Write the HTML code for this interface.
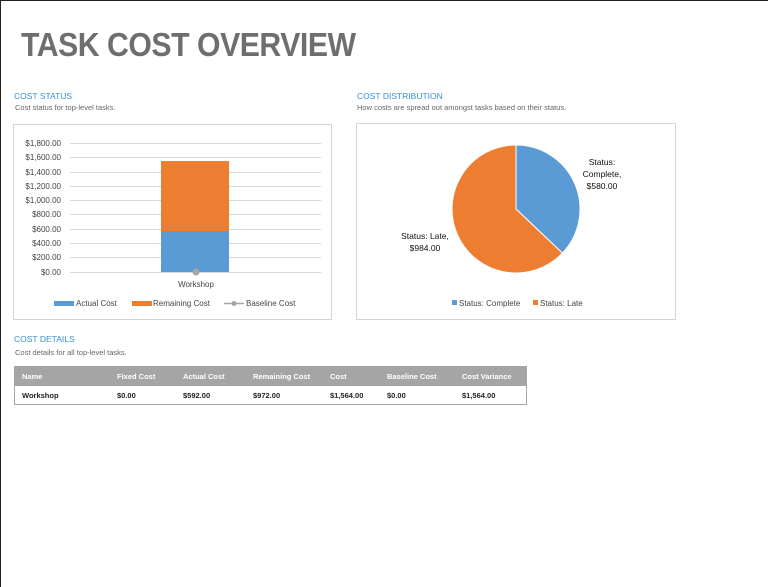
<!DOCTYPE html>
<html><head><style>
body{margin:0;width:768px;height:587px;background:#fff;font-family:"Liberation Sans",sans-serif;position:relative;overflow:hidden}
.bl{position:absolute;left:0;top:0;width:1px;height:587px;background:#222}
.bt{position:absolute;left:0;top:0;width:768px;height:1px;background:#222}
.a{position:absolute}
h1{position:absolute;left:21px;top:26px;margin:0;font-size:33px;font-weight:bold;color:#6e6e6e;letter-spacing:-0.5px;transform:scaleX(0.915);transform-origin:0 0}
.h{color:#3a8fd6;font-size:8.5px}
.s{color:#666;font-size:7.5px}
.box{border:1px solid #d4d4d4;background:#fff}
table{border-collapse:collapse;font-size:7.5px}
th{background:#a5a5a5;color:#fff;text-align:left;font-weight:bold;height:19px;padding:0 0 0 7px}
td{height:18px;padding:0 0 0 7px;font-weight:bold;color:#222}
</style></head><body>
<div class="bl"></div><div class="bt"></div>
<h1>TASK COST OVERVIEW</h1>
<div class="a h" style="left:14px;top:91px">COST STATUS</div>
<div class="a s" style="left:15px;top:103px">Cost status for top-level tasks.</div>
<div class="a box" style="left:13px;top:124px;width:317px;height:194px"></div>
<svg class="a" style="left:0;top:0" width="768" height="587">
<g stroke="#d9d9d9" stroke-width="1">
<line x1="70" x2="321" y1="143.5" y2="143.5"/><line x1="70" x2="321" y1="157.5" y2="157.5"/><line x1="70" x2="321" y1="172.5" y2="172.5"/><line x1="70" x2="321" y1="186.5" y2="186.5"/><line x1="70" x2="321" y1="200.5" y2="200.5"/><line x1="70" x2="321" y1="214.5" y2="214.5"/><line x1="70" x2="321" y1="229.5" y2="229.5"/><line x1="70" x2="321" y1="243.5" y2="243.5"/><line x1="70" x2="321" y1="257.5" y2="257.5"/><line x1="70" x2="321" y1="272.5" y2="272.5"/>
</g>
<g font-size="8" fill="#444" text-anchor="end" font-family="Liberation Sans">
<text x="61" y="146">$1,800.00</text><text x="61" y="160">$1,600.00</text><text x="61" y="175">$1,400.00</text><text x="61" y="189">$1,200.00</text><text x="61" y="203">$1,000.00</text><text x="61" y="217">$800.00</text><text x="61" y="232">$600.00</text><text x="61" y="246">$400.00</text><text x="61" y="260">$200.00</text><text x="61" y="275">$0.00</text>
</g>
<rect x="161" y="161" width="68" height="70" fill="#ed7d31"/>
<rect x="161" y="231" width="68" height="41" fill="#5b9bd5"/>
<circle cx="196" cy="272" r="3.5" fill="#a5a5a5"/>
<text x="196" y="287" font-size="8" fill="#444" text-anchor="middle">Workshop</text>
<rect x="54" y="301" width="20" height="5" fill="#5b9bd5"/><text x="76" y="306" font-size="8" fill="#444">Actual Cost</text>
<rect x="132" y="301" width="20" height="5" fill="#ed7d31"/><text x="153" y="306" font-size="8" fill="#444">Remaining Cost</text>
<line x1="224" x2="244" y1="303.5" y2="303.5" stroke="#a5a5a5" stroke-width="1.5"/><circle cx="234" cy="303.5" r="2.5" fill="#a5a5a5"/><text x="246" y="306" font-size="8" fill="#444">Baseline Cost</text>
</svg>
<div class="a h" style="left:357px;top:91px">COST DISTRIBUTION</div>
<div class="a s" style="left:357px;top:103px">How costs are spread out amongst tasks based on their status.</div>
<div class="a box" style="left:356px;top:123px;width:318px;height:195px"></div>
<svg class="a" style="left:0;top:0" width="768" height="587">
<path d="M516,209 L516,145 A64,64 0 0 1 562.4,253.1 Z" fill="#5b9bd5" stroke="#fff" stroke-width="1"/>
<path d="M516,209 L562.4,253.1 A64,64 0 1 1 516,145 Z" fill="#ed7d31" stroke="#fff" stroke-width="1"/>
<g font-size="8.5" fill="#111" text-anchor="middle">
<text x="602" y="165">Status:</text><text x="602" y="177">Complete,</text><text x="602" y="189">$580.00</text>
<text x="425" y="239">Status: Late,</text><text x="425" y="251">$984.00</text>
</g>
<rect x="452" y="300" width="5" height="5" fill="#5b9bd5"/><text x="459" y="306" font-size="8" fill="#444">Status: Complete</text>
<rect x="533" y="300" width="5" height="5" fill="#ed7d31"/><text x="540" y="306" font-size="8" fill="#444">Status: Late</text>
</svg>
<div class="a h" style="left:14px;top:334px">COST DETAILS</div>
<div class="a s" style="left:15px;top:348px">Cost details for all top-level tasks.</div>
<table class="a" style="left:14px;top:366px;width:513px;border:1px solid #a5a5a5">
<tr><th style="width:88px">Name</th><th style="width:59px">Fixed Cost</th><th style="width:63px">Actual Cost</th><th style="width:70px">Remaining Cost</th><th style="width:50px">Cost</th><th style="width:68px">Baseline Cost</th><th>Cost Variance</th></tr>
<tr><td>Workshop</td><td>$0.00</td><td>$592.00</td><td>$972.00</td><td>$1,564.00</td><td>$0.00</td><td>$1,564.00</td></tr>
</table>
</body></html>
